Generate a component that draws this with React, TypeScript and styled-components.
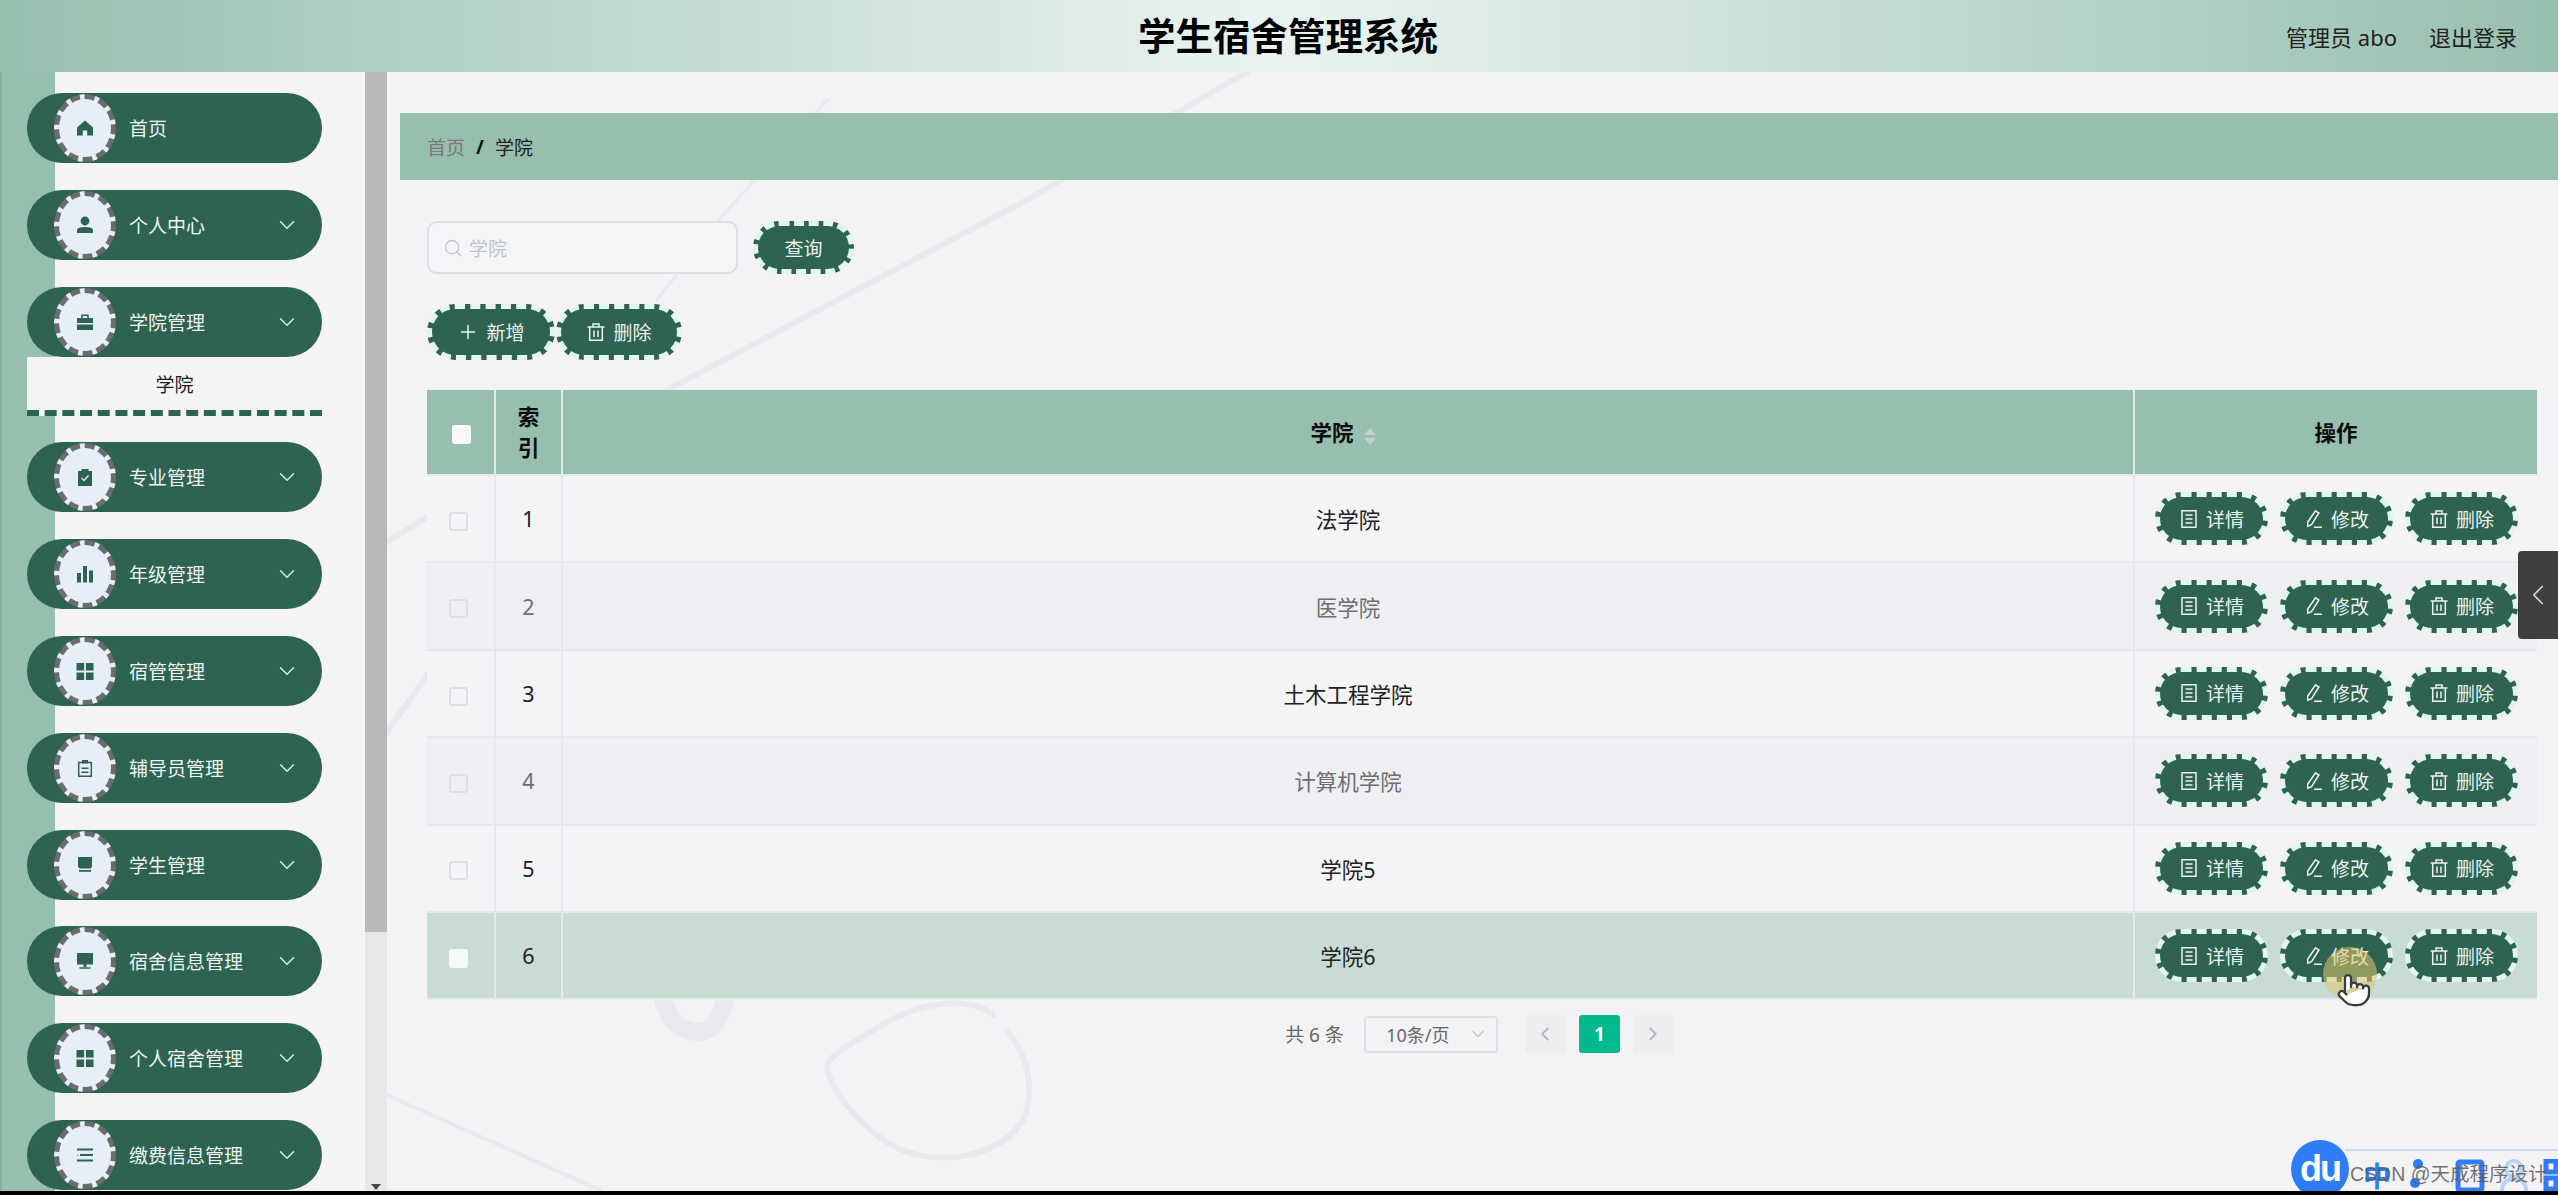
import React from "react";
import styled, { createGlobalStyle, css } from "styled-components";
import { ChevronDown, ChevronLeft, ChevronRight, Plus, Pointer, Search } from "lucide-react";

const DARK = "#2d6350";
const SAGE = "#97bfae";

const GlobalStyle = createGlobalStyle`
  html, body {
    margin: 0;
    padding: 0;
    overflow: hidden;
    background: #000;
  }
  * {
    box-sizing: border-box;
  }
  body, button, input, table {
    font-family: "Noto Sans", "Noto Sans CJK SC", "Liberation Sans", sans-serif;
  }
`;

const Page = styled.div`
  position: relative;
  width: 2558px;
  height: 1195px;
  display: flex;
  flex-direction: column;
  overflow: hidden;
`;

const Header = styled.header`
  flex: 0 0 72px;
  display: grid;
  grid-template-columns: 1fr auto 1fr;
  align-items: center;
  padding: 0 41px 0 59px;
  background: linear-gradient(90deg, ${SAGE} 0%, #e9f4f1 50%, ${SAGE} 100%);
`;

const Title = styled.h1`
  grid-column: 2;
  margin: 0;
  font-size: 37.5px;
  line-height: 72px;
  font-weight: 700;
  color: #000;
`;

const HeaderActions = styled.div`
  grid-column: 3;
  justify-self: end;
  display: flex;
  gap: 32px;
  font-size: 22px;
  color: #222;
`;

const Body = styled.div`
  flex: 1;
  min-height: 0;
  display: flex;
`;

const BottomEdge = styled.div`
  flex: 0 0 4px;
  background: #000;
`;

const Sidebar = styled.aside`
  flex: 0 0 365px;
  padding: 21px 43px 0 27px;
  overflow: hidden;
  background: linear-gradient(90deg, #86ad9c 2px, ${SAGE} 2px, ${SAGE} 55px, #f4f4f5 55px);
`;

const MenuList = styled.nav`
  display: flex;
  flex-direction: column;
  gap: 26.8px;
`;

const MenuItem = styled.div`
  height: 70px;
  display: flex;
  align-items: center;
  padding: 0 22px 0 27px;
  border-radius: 35px;
  background: ${DARK};
  color: #eef4f1;
  font-size: 19px;
`;

const MenuIcon = styled.span`
  flex: 0 0 62px;
  height: 68px;
  display: flex;
  align-items: center;
  justify-content: center;
  margin-right: 13px;
  border: 5px dashed #6c6c6e;
  border-radius: 50%;
  background: #e6eef7;
  color: ${DARK};
`;

const MenuArrow = styled(ChevronDown)`
  margin-left: auto;
  color: #dbe8e2;
`;

const SubMenu = styled.div`
  height: 59px;
  padding-top: 1px;
  display: flex;
  align-items: center;
  justify-content: center;
  border-bottom: 6px dashed ${DARK};
  background: #f4f4f5;
  font-size: 19px;
  color: #1c1c1c;
`;

const ScrollTrack = styled.div`
  position: relative;
  flex: 0 0 22px;
  background: #e8e6e8;
`;

const ScrollThumb = styled.div`
  height: 860px;
  background: #b8b8b8;
`;

const ScrollDown = styled.span`
  position: absolute;
  left: 6px;
  bottom: 1px;
  border-style: solid;
  border-width: 6px 5.5px 0;
  border-color: #4a4a4a transparent transparent;
`;

const Main = styled.main`
  position: relative;
  flex: 1;
  min-width: 0;
  padding-top: 41px;
  background: #f3f3f6;
`;

const Sketch = styled.svg`
  position: absolute;
  inset: 0;
  width: 100%;
  height: 100%;
  opacity: 0.6;
`;

const Breadcrumb = styled.div`
  position: relative;
  height: 67px;
  margin-left: 13px;
  padding-left: 27px;
  display: flex;
  align-items: center;
  gap: 10px;
  background: ${SAGE};
  font-size: 19px;
  color: #222;
`;

const CrumbLink = styled.span`
  color: #787878;
`;

const CrumbSep = styled.span`
  margin: 0 1px;
  font-weight: 700;
  color: #111;
`;

const Content = styled.section`
  position: relative;
  padding: 41px 21px 0 40px;
`;

const SearchRow = styled.div`
  display: flex;
  align-items: center;
  gap: 15px;
  margin-bottom: 30px;
`;

const SearchBox = styled.label`
  width: 311px;
  height: 53px;
  display: flex;
  align-items: center;
  gap: 6px;
  padding: 0 14px;
  border: 2px solid #dcdfe6;
  border-radius: 10px;
  background: #f5f5f7;
  color: #c0c4cc;
  font-size: 19px;
`;

const ToolRow = styled.div`
  display: flex;
  gap: 1px;
  margin-bottom: 30px;
`;

const DashedButton = styled.button<{ $w: number; $h?: number }>`
  width: ${(p) => p.$w}px;
  height: ${(p) => p.$h ?? 53}px;
  flex: none;
  display: inline-flex;
  align-items: center;
  justify-content: center;
  gap: 7px;
  padding: 0;
  border: 5px dashed #e2f5ee;
  border-radius: 30px;
  background: ${DARK};
  color: #edf3f0;
  font-size: 19px;
`;

const Table = styled.table`
  width: 2110px;
  table-layout: fixed;
  border-collapse: collapse;
  font-size: 21.5px;
`;

const HeadCell = styled.th<{ $narrow?: boolean }>`
  height: 85px;
  padding: 0 ${(p) => (p.$narrow ? 14 : 0)}px;
  background: ${SAGE};
  border-right: 2px solid #e3e8ec;
  border-bottom: 2px solid #e3e8ec;
  font-weight: 700;
  line-height: 31px;
  color: #0c0c0c;
  text-align: center;
  &:last-child {
    border-right: 0;
  }
`;

const SortCaret = styled.span`
  display: inline-flex;
  flex-direction: column;
  gap: 3px;
  margin: 0 10px;
  vertical-align: 6px;
  &::before,
  &::after {
    content: "";
    border-style: solid;
    border-color: transparent;
  }
  &::before {
    border-width: 0 6.5px 7px;
    border-bottom-color: #c6cfd2;
  }
  &::after {
    border-width: 7px 6.5px 0;
    border-top-color: #c6cfd2;
  }
`;

const rowTones = {
  odd: css`
    background: #f4f4f6;
    color: #222;
  `,
  even: css`
    background: #eeeef3;
    color: #6e6e72;
  `,
  hover: css`
    background: #c8dbd5;
    color: #222;
  `,
};

const Row = styled.tr<{ $tone: keyof typeof rowTones }>`
  height: 87.4px;
  ${(p) => rowTones[p.$tone]}
`;

const Cell = styled.td`
  padding: 0;
  border-right: 2px solid #e6e8ef;
  border-bottom: 2px solid #e6e8ef;
  text-align: center;
  &:last-child {
    border-right: 0;
  }
`;

const Check = styled.span<{ $white?: boolean; $head?: boolean }>`
  display: inline-block;
  width: 19px;
  height: 19px;
  margin: ${(p) => (p.$head ? "0 0 0 2px" : "0 4px 0 0")};
  vertical-align: middle;
  border: 2px solid ${(p) => (p.$head ? "#fff" : p.$white ? "#f6f6f8" : "#dcdfe6")};
  border-radius: 3px;
  background: ${(p) => (p.$head || p.$white ? "#f8f8f9" : "transparent")};
`;

const Actions = styled.div`
  display: flex;
  gap: 12px;
  padding-left: 20px;
`;

const Pager = styled.div`
  display: flex;
  align-items: center;
  justify-content: center;
  margin-top: 15px;
  padding-right: 5px;
  font-size: 19px;
  color: #666;
`;

const PagerTotal = styled.span`
  margin-right: 20px;
`;

const PageSize = styled.div`
  position: relative;
  width: 134px;
  height: 37px;
  margin-right: 27px;
  padding-right: 26px;
  display: flex;
  align-items: center;
  justify-content: center;
  border: 2px solid #dcdfe6;
  border-radius: 4px;
  font-size: 18px;
`;

const PageArrow = styled(ChevronDown)`
  position: absolute;
  right: 8px;
  color: #c0c4cc;
`;

const PageButton = styled.span<{ $active?: boolean }>`
  width: 41px;
  height: 38px;
  margin-right: 13px;
  display: flex;
  align-items: center;
  justify-content: center;
  border-radius: 3px;
  background: ${(p) => (p.$active ? "#00b98c" : "#eeedf0")};
  color: ${(p) => (p.$active ? "#fff" : "#b4b6c0")};
  font-weight: 700;
  font-size: 19px;
  &:last-child {
    margin-right: 0;
  }
`;

const SideTab = styled.div`
  position: absolute;
  right: 0;
  top: 551px;
  width: 40px;
  height: 88px;
  display: flex;
  align-items: center;
  justify-content: center;
  border-radius: 4px 0 0 4px;
  background: #3f3f3f;
  color: #d6d6d6;
`;

const PressRing = styled.span`
  position: absolute;
  left: 2323px;
  top: 947px;
  width: 54px;
  height: 54px;
  border-radius: 50%;
  background: rgba(226, 198, 110, 0.55);
`;

const HandCursor = styled(Pointer)`
  position: absolute;
  left: 2336px;
  top: 972px;
  fill: #fff;
  color: #3a3a44;
`;

const ImeBar = styled.div`
  position: absolute;
  left: 2291px;
  right: 0;
  top: 1140px;
  height: 51px;
  display: flex;
  align-items: flex-start;
  overflow: hidden;
  color: #2f7df6;
`;

const ImeLogo = styled.span`
  position: relative;
  z-index: 1;
  flex: 0 0 58px;
  height: 58px;
  display: flex;
  align-items: center;
  justify-content: center;
  border-radius: 50%;
  background: #2f7df6;
  color: #fff;
  font-family: "Liberation Sans", sans-serif;
  font-size: 36px;
  font-weight: 700;
  letter-spacing: -2px;
`;

const ImeTray = styled.div`
  flex: 1;
  height: 60px;
  margin: 9px 0 0 -4px;
  padding: 8px 0 0 18px;
  display: flex;
  align-items: flex-start;
  gap: 14px;
  border-top: 2px solid #c6d8ec;
  font-size: 28px;
  line-height: 34px;
  font-weight: 700;
`;

const ImeIcon = styled.svg<{ $push?: number }>`
  flex: none;
  margin-left: ${(p) => p.$push ?? 0}px;
`;

const Watermark = styled.span`
  position: absolute;
  left: 2350px;
  top: 1161px;
  font-family: "Liberation Sans", "Noto Sans CJK SC", sans-serif;
  font-size: 19.5px;
  line-height: 26px;
  color: rgba(90, 90, 90, 0.85);
  white-space: nowrap;
`;

type GlyphProps = { children: React.ReactNode };

const Glyph = ({ children }: GlyphProps) => (
  <svg width="18" height="18" viewBox="0 0 18 18" fill="currentColor">
    {children}
  </svg>
);

const menuGlyphs: Record<string, React.ReactNode> = {
  home: <path d="M9 1.5 17 8.6V16.5H11.2V11.4H6.8V16.5H1V8.6Z" />,
  user: (
    <>
      <circle cx="9" cy="5" r="4.4" />
      <path d="M1 17v-2.6C1 12 4.4 11 9 11s8 1 8 3.4V17Z" />
    </>
  ),
  case: (
    <>
      <path d="M6 5V2.2h6V5" fill="none" stroke="currentColor" strokeWidth="1.6" />
      <path d="M1 5h16v5H1ZM1 11.4h16V17H1Z" />
    </>
  ),
  claim: (
    <>
      <path d="M2 3h3.5V1h7v2H16v15H2Z" />
      <path d="m5.5 10 2.5 2.5 4.5-5" fill="none" stroke="#e6eef7" strokeWidth="1.3" />
    </>
  ),
  bars: <path d="M1 8h4v9.5H1ZM7 1h4v16.5H7ZM13 5.5h4v12h-4Z" />,
  grid: <path d="M.5 1h7.6v7.6H.5ZM9.9 1h7.6v7.6H9.9ZM.5 10.4h7.6V18H.5ZM9.9 10.4h7.6V18H9.9Z" />,
  order: (
    <>
      <path d="M2.7 3.5h12.6v13.8H2.7Z" fill="none" stroke="currentColor" strokeWidth="1.5" />
      <path d="M6 1h6v3.4H6ZM5.5 8.5h7v1.5h-7ZM5.5 12.5h7V14h-7Z" />
    </>
  ),
  book: (
    <>
      <path d="M2 1h14v9.5l-1.5 2h-11L2 10.5Z" />
      <path d="M3 14h12v1.8H3Z" />
    </>
  ),
  screen: <path d="M1 1h16v11.5H1ZM7.6 12.5h2.8v2.6H7.6ZM3.5 15.2h11v1.5h-11Z" />,
  lines: <path d="M1 2.5h16v2H1ZM4 8h13v2H4ZM1 8.5l2 .5-2 .5ZM1 13.5h16v2H1Z" />,
};

const iconProps = {
  width: 20,
  height: 20,
  viewBox: "0 0 20 20",
  fill: "none",
  stroke: "currentColor",
  strokeWidth: 1.5,
};

const TicketIcon = () => (
  <svg {...iconProps}>
    <path d="M3 1.8h14v16.4H3ZM6.5 6h7M6.5 10h7M6.5 14h7" />
  </svg>
);

const EditIcon = () => (
  <svg {...iconProps}>
    <path d="m11.5 1.8 3.4 2.2-7.4 11.6-3.7 1.6-.2-4ZM10 18.3h8" />
  </svg>
);

const TrashIcon = () => (
  <svg {...iconProps}>
    <path d="M1.5 5h17M7 5V2h6v3M3.7 5v13.2h12.6V5M8 8.5v6.5M12 8.5v6.5" />
  </svg>
);

const menus = [
  { label: "首页", icon: "home", plain: true },
  { label: "个人中心", icon: "user" },
  { label: "学院管理", icon: "case", child: "学院" },
  { label: "专业管理", icon: "claim" },
  { label: "年级管理", icon: "bars" },
  { label: "宿管管理", icon: "grid" },
  { label: "辅导员管理", icon: "order" },
  { label: "学生管理", icon: "book" },
  { label: "宿舍信息管理", icon: "screen" },
  { label: "个人宿舍管理", icon: "grid" },
  { label: "缴费信息管理", icon: "lines" },
];

const colleges = ["法学院", "医学院", "土木工程学院", "计算机学院", "学院5", "学院6"];

const App = () => (
  <Page>
    <GlobalStyle />
    <Header>
      <Title>学生宿舍管理系统</Title>
      <HeaderActions>
        <span>管理员 abo</span>
        <span>退出登录</span>
      </HeaderActions>
    </Header>
    <Body>
      <Sidebar>
        <MenuList>
          {menus.map((m) => (
            <div key={m.label}>
              <MenuItem>
                <MenuIcon>
                  <Glyph>{menuGlyphs[m.icon]}</Glyph>
                </MenuIcon>
                {m.label}
                {!m.plain && <MenuArrow size={26} strokeWidth={1.4} />}
              </MenuItem>
              {m.child && <SubMenu>{m.child}</SubMenu>}
            </div>
          ))}
        </MenuList>
      </Sidebar>
      <ScrollTrack>
        <ScrollThumb />
        <ScrollDown />
      </ScrollTrack>
      <Main>
        <Sketch viewBox="0 0 2171 1119" fill="none" stroke="#e2e3ea" strokeLinecap="round">
          <path d="M860 0 640 128 280 318" strokeWidth="6" />
          <path d="M440 28 330 150 270 228" strokeWidth="3" />
          <path d="M0 470 40 445M0 660 60 575" strokeWidth="6" />
          <path d="M275 915c0 30 20 45 35 45 18 0 30-20 28-50" strokeWidth="18" />
          <path d="M606 943C585 925 540 928 500 950 460 975 435 985 441 1000 450 1030 490 1070 520 1080 560 1092 610 1085 635 1050 650 1020 640 980 620 960" strokeWidth="6" />
          <path d="M0 1023 213 1118" strokeWidth="4" />
        </Sketch>
        <Breadcrumb>
          <CrumbLink>首页</CrumbLink>
          <CrumbSep>/</CrumbSep>
          <span>学院</span>
        </Breadcrumb>
        <Content>
          <SearchRow>
            <SearchBox>
              <Search size={20} strokeWidth={1.6} />
              学院
            </SearchBox>
            <DashedButton $w={101}>查询</DashedButton>
          </SearchRow>
          <ToolRow>
            <DashedButton $w={128} $h={56}>
              <Plus size={22} strokeWidth={1.6} />
              新增
            </DashedButton>
            <DashedButton $w={126} $h={56}>
              <TrashIcon />
              删除
            </DashedButton>
          </ToolRow>
          <Table>
            <colgroup>
              <col width={68} />
              <col width={67} />
              <col width={1572} />
              <col width={403} />
            </colgroup>
            <thead>
              <tr>
                <HeadCell>
                  <Check $head />
                </HeadCell>
                <HeadCell $narrow>索引</HeadCell>
                <HeadCell>
                  学院
                  <SortCaret />
                </HeadCell>
                <HeadCell>操作</HeadCell>
              </tr>
            </thead>
            <tbody>
              {colleges.map((name, i) => {
                const tone = i === 5 ? "hover" : i % 2 ? "even" : "odd";
                return (
                  <Row key={name} $tone={tone}>
                    <Cell>
                      <Check $white={i === 5} />
                    </Cell>
                    <Cell>{i + 1}</Cell>
                    <Cell>{name}</Cell>
                    <Cell>
                      <Actions>
                        <DashedButton $w={113}>
                          <TicketIcon />
                          详情
                        </DashedButton>
                        <DashedButton $w={113}>
                          <EditIcon />
                          修改
                        </DashedButton>
                        <DashedButton $w={113}>
                          <TrashIcon />
                          删除
                        </DashedButton>
                      </Actions>
                    </Cell>
                  </Row>
                );
              })}
            </tbody>
          </Table>
          <Pager>
            <PagerTotal>共 6 条</PagerTotal>
            <PageSize>
              10条/页
              <PageArrow size={20} strokeWidth={1.5} />
            </PageSize>
            <PageButton>
              <ChevronLeft size={22} strokeWidth={2} />
            </PageButton>
            <PageButton $active>1</PageButton>
            <PageButton>
              <ChevronRight size={22} strokeWidth={2} />
            </PageButton>
          </Pager>
        </Content>
      </Main>
    </Body>
    <BottomEdge />
    <SideTab>
      <ChevronLeft size={34} strokeWidth={1.2} />
    </SideTab>
    <PressRing />
    <HandCursor size={36} strokeWidth={1.5} />
    <ImeBar>
      <ImeLogo>du</ImeLogo>
      <ImeTray>
        <span>中</span>
        <ImeIcon width="22" height="32" viewBox="0 0 22 32" fill="currentColor">
          <circle cx="13" cy="5" r="5" />
          <circle cx="10" cy="24" r="5" />
        </ImeIcon>
        <ImeIcon $push={14} width="30" height="32" viewBox="0 0 30 32" fill="none" stroke="currentColor" strokeWidth="5">
          <rect x="3" y="3" width="24" height="28" rx="2" />
        </ImeIcon>
        <ImeIcon width="30" height="32" viewBox="0 0 30 32" fill="none" stroke="#b9d3f5" strokeWidth="4">
          <circle cx="15" cy="10" r="8" />
          <path d="M3 32c0-9 6-12 12-12s12 3 12 12" />
        </ImeIcon>
        <ImeIcon width="34" height="32" viewBox="0 0 34 32" fill="none" stroke="currentColor" strokeWidth="5">
          <rect x="3" y="2" width="10" height="11" />
          <rect x="19" y="2" width="10" height="11" />
          <rect x="3" y="19" width="10" height="11" />
        </ImeIcon>
      </ImeTray>
    </ImeBar>
    <Watermark>CSDN @天成程序设计</Watermark>
  </Page>
);

export default App;
